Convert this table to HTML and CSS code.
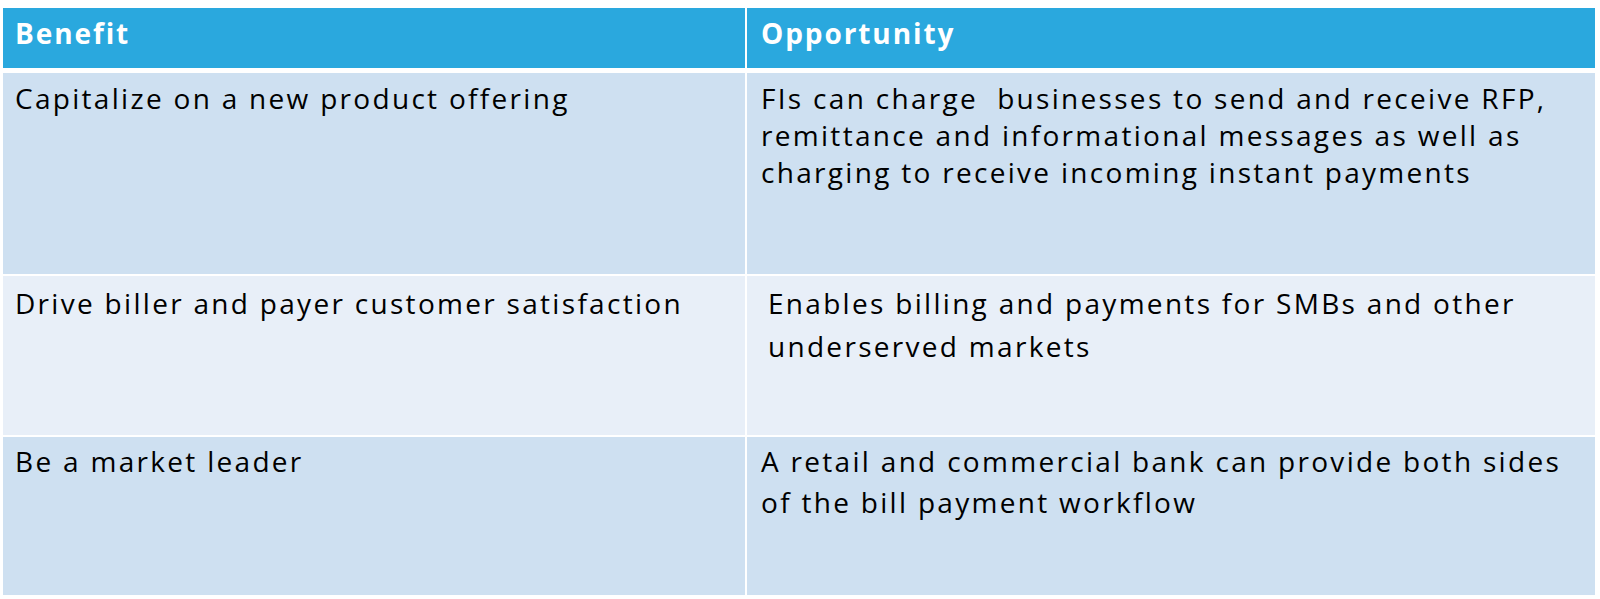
FILE: index.html
```html
<!DOCTYPE html>
<html>
<head>
<meta charset="utf-8">
<title>Benefit / Opportunity</title>
<link rel="stylesheet" href="styles.css">
</head>
<body>
<div class="table">
  <div class="row head">
    <div class="cell">Benefit</div>
    <div class="cell">Opportunity</div>
  </div>
  <div class="row odd r1">
    <div class="cell">Capitalize on a new product offering</div>
    <div class="cell">FIs can charge&nbsp; businesses to send and receive RFP,<br>remittance and informational messages as well as<br>charging to receive incoming instant payments</div>
  </div>
  <div class="row even r2">
    <div class="cell">Drive biller and payer customer satisfaction</div>
    <div class="cell indent">Enables billing and payments for SMBs and other<br>underserved markets</div>
  </div>
  <div class="row odd r3">
    <div class="cell">Be a market leader</div>
    <div class="cell">A retail and commercial bank can provide both sides<br>of the bill payment workflow</div>
  </div>
</div>
</body>
</html>
```
FILE: styles.css
```css
html, body {
  margin: 0;
  padding: 0;
  background: #ffffff;
}

body {
  padding: 8px 5px 0 3px;
  font-family: "Open Sans", "Noto Sans", sans-serif;
  font-size: 28px;
  color: #000000;
}

.table {
  display: flex;
  flex-direction: column;
  gap: 2px;
}

.row {
  display: grid;
  grid-template-columns: 742px 1fr;
  column-gap: 2px;
}

.cell {
  padding: 4px 14px 0 12px;
  line-height: 40px;
  letter-spacing: 2.3px;
  white-space: nowrap;
}

.row .cell + .cell {
  padding-left: 14px;
}

.head {
  height: 60px;
  margin-bottom: 3px;
}

.head .cell {
  background: #2aa8de;
  color: #ffffff;
  font-weight: 700;
  letter-spacing: 1.9px;
  padding-top: 5px;
}

.odd .cell {
  background: #cee0f1;
}

.even .cell {
  background: #e8eff8;
}

.r1 { height: 201px; }
.r1 .cell {
  line-height: 37px;
  padding-top: 7px;
}

.r2 { height: 159px; }
.r2 .cell {
  line-height: 43px;
  padding-top: 6px;
}

.r3 { height: 158px; }
.r3 .cell {
  line-height: 41px;
  padding-top: 4px;
}

.row .cell.indent {
  padding-left: 21px;
}
```
